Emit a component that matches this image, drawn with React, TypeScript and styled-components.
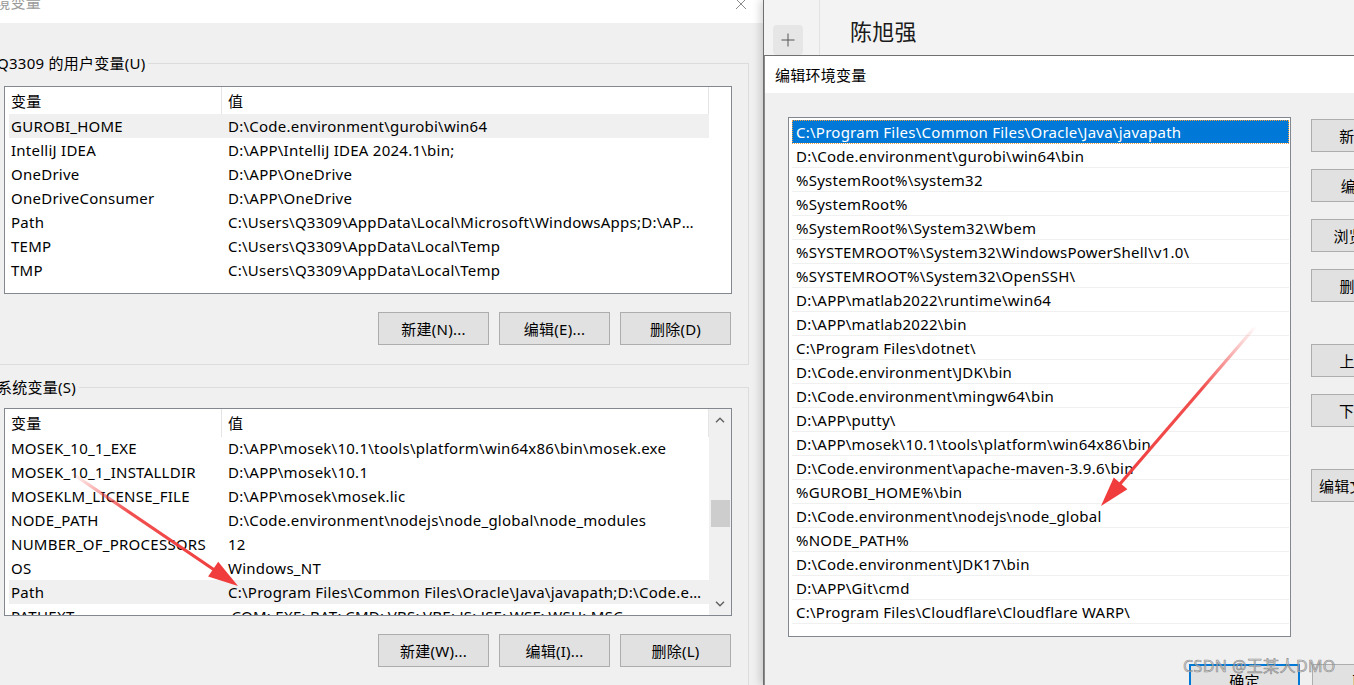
import React from "react";
import styled, { createGlobalStyle } from "styled-components";

const FONT = `"Noto Sans", "Noto Sans CJK SC", sans-serif`;

const GlobalStyle = createGlobalStyle`
  html, body { margin: 0; padding: 0; overflow: hidden; background: #f0f0f0; }
  * { box-sizing: border-box; }
`;

const Screen = styled.div`
  position: relative;
  width: 1354px;
  height: 685px;
  overflow: hidden;
  display: flex;
  font-family: ${FONT};
  font-size: 15px;
  letter-spacing: 0.25px;
  color: #000;
  background: #f0f0f0;
`;

/* ---------- left: 环境变量 window ---------- */
const EnvWindow = styled.div`
  width: 763px;
  flex: none;
  display: flex;
  flex-direction: column;
  background: #f0f0f0;
`;

const EnvTitleBar = styled.div`
  height: 23px;
  flex: none;
  background: #fff;
  display: flex;
  justify-content: space-between;
  align-items: flex-start;
  overflow: hidden;
`;

const EnvTitle = styled.span`
  margin: -9px 0 0 -20px;
  line-height: 22px;
  color: #9a9a9a;
  white-space: nowrap;
`;

const CloseGlyph = styled.svg`
  margin: -2px 16px 0 0;
  flex: none;
`;

const EnvBody = styled.div`
  flex: 1;
  padding: 29px 14px 0 0;
  display: flex;
  flex-direction: column;
`;

const GroupBox = styled.fieldset<{ $padTop: number; $mt: number }>`
  margin: ${(p) => p.$mt}px 0 0 0;
  padding: ${(p) => p.$padTop}px 16px 19px 4px;
  border: 1px solid #dcdcdc;
  border-left: none;
  min-width: 0;
`;

const GroupLegend = styled.legend`
  padding: 0 3px 0 0;
  margin-left: -7px;
  line-height: 22px;
  white-space: nowrap;
`;

const ListBox = styled.div`
  width: 728px;
  height: 208px;
  border: 1px solid #828790;
  background: #fff;
  display: flex;
  overflow: hidden;
`;

const ListContent = styled.div`
  width: 704px;
  flex: none;
  display: flex;
  flex-direction: column;
  overflow: hidden;
`;

const HeaderRow = styled.div`
  display: grid;
  grid-template-columns: 217px 487px;
  height: 27px;
  flex: none;
`;

const HeaderCell = styled.div`
  padding-left: 6px;
  line-height: 28px;
  border-right: 1px solid #e5e5e5;
`;

const VarRow = styled.div<{ $selected?: boolean }>`
  display: grid;
  grid-template-columns: 212px 1fr;
  height: 24px;
  flex: none;
  margin-left: 4px;
  align-items: center;
  background: ${(p) => (p.$selected ? "#f0f0f0" : "transparent")};
`;

const NameCell = styled.div`
  padding-left: 2px;
  white-space: nowrap;
  overflow: hidden;
`;

const ValueCell = styled.div`
  padding: 0 7px 0 7px;
  white-space: nowrap;
  overflow: hidden;
  text-overflow: ellipsis;
`;

const ScrollBar = styled.div`
  width: 22px;
  flex: none;
  background: #f0f0f0;
  display: flex;
  flex-direction: column;
`;

const ScrollArrow = styled.div`
  height: 22px;
  flex: none;
  display: flex;
  align-items: center;
  justify-content: center;
`;

const ScrollTrack = styled.div`
  flex: 1;
  display: flex;
  flex-direction: column;
  align-items: center;
`;

const ScrollThumb = styled.div<{ $offset: number }>`
  margin-top: ${(p) => p.$offset}px;
  width: 19px;
  height: 27px;
  background: #cdcdcd;
`;

const ButtonRow = styled.div`
  display: flex;
  justify-content: flex-end;
  gap: 10px;
  margin-top: 18px;
  padding-right: 1px;
`;

const WinButton = styled.button<{ $width?: number }>`
  width: ${(p) => p.$width ?? 111}px;
  height: 33px;
  flex: none;
  padding: 0;
  border: 1px solid #adadad;
  background: #e1e1e1;
  font-family: ${FONT};
  font-size: 15px;
  letter-spacing: 0.25px;
  color: #000;
  white-space: nowrap;
  overflow: hidden;
`;

/* ---------- right: settings window + 编辑环境变量 ---------- */
const SettingsWindow = styled.div`
  flex: 1;
  position: relative;
  display: flex;
  flex-direction: column;
  background: #f3f3f3;
  border-left: 1px solid #6e6e6e;
  box-shadow: -3px 0 8px rgba(0, 0, 0, 0.16);
  min-width: 0;
`;

const SettingsHeader = styled.div`
  height: 55px;
  flex: none;
  display: flex;
`;

const NavRail = styled.div`
  width: 56px;
  flex: none;
  border-right: 1px solid #e2e2e2;
  padding: 25px 0 0 9px;
`;

const AddButton = styled.div`
  width: 30px;
  height: 30px;
  border-radius: 4px;
  background: #e6e6e6;
  display: flex;
  align-items: center;
  justify-content: center;
`;

const ProfileName = styled.div`
  padding: 16px 0 0 30px;
  font-size: 22px;
  line-height: 30px;
  color: #1b1b1b;
`;

const EditDialog = styled.div`
  flex: 1;
  display: flex;
  flex-direction: column;
  background: #f0f0f0;
  border-top: 1px solid #707070;
  border-left: 1px solid #8a8a8a;
  min-width: 0;
`;

const DialogTitleBar = styled.div`
  height: 37px;
  flex: none;
  background: #fff;
  padding: 0 0 1px 10px;
  display: flex;
  align-items: center;
`;

const DialogBody = styled.div`
  display: flex;
  padding: 24px 0 0 23px;
`;

const PathList = styled.div`
  width: 503px;
  height: 520px;
  flex: none;
  border: 1px solid #828790;
  background: #fff;
  padding: 2px 1px 0 3px;
  overflow: hidden;
  display: flex;
  flex-direction: column;
`;

const PathItem = styled.div<{ $selected?: boolean }>`
  height: 24px;
  flex: none;
  padding-left: 4px;
  line-height: 24px;
  white-space: nowrap;
  border-bottom: 1px solid ${(p) => (p.$selected ? "#fff" : "#f0f0f0")};
  background: ${(p) => (p.$selected ? "#0078d7" : "transparent")};
  color: ${(p) => (p.$selected ? "#fff" : "#000")};
  outline: ${(p) => (p.$selected ? "1px dotted #f0a040" : "none")};
  outline-offset: -1px;
`;

const SideButtons = styled.div`
  margin-left: 20px;
  padding-top: 2px;
  display: flex;
  flex-direction: column;
`;

const SideButton = styled(WinButton)<{ $gap: number }>`
  margin-top: ${(p) => p.$gap}px;
`;

const DialogFooter = styled.div`
  display: flex;
  gap: 12px;
  margin-top: 27px;
  padding-left: 424px;
`;

const PrimaryButton = styled(WinButton)`
  border: 2px solid #0078d7;
`;

/* ---------- overlays ---------- */
const Watermark = styled.div`
  position: absolute;
  left: 1183px;
  top: 656px;
  font-size: 16px;
  line-height: 20px;
  letter-spacing: 0.4px;
  color: rgba(200, 200, 200, 0.7);
  -webkit-text-stroke: 0.6px rgba(110, 110, 110, 0.75);
  white-space: nowrap;
  pointer-events: none;
`;

const ArrowLayer = styled.svg`
  position: absolute;
  left: 0;
  top: 0;
  pointer-events: none;
`;

/* ---------- data ---------- */
const userVars: [string, string][] = [
  ["GUROBI_HOME", "D:\\Code.environment\\gurobi\\win64"],
  ["IntelliJ IDEA", "D:\\APP\\IntelliJ IDEA 2024.1\\bin;"],
  ["OneDrive", "D:\\APP\\OneDrive"],
  ["OneDriveConsumer", "D:\\APP\\OneDrive"],
  ["Path", "C:\\Users\\Q3309\\AppData\\Local\\Microsoft\\WindowsApps;D:\\APP\\Microsoft VS Code\\bin"],
  ["TEMP", "C:\\Users\\Q3309\\AppData\\Local\\Temp"],
  ["TMP", "C:\\Users\\Q3309\\AppData\\Local\\Temp"],
];

const sysVars: [string, string][] = [
  ["MOSEK_10_1_EXE", "D:\\APP\\mosek\\10.1\\tools\\platform\\win64x86\\bin\\mosek.exe"],
  ["MOSEK_10_1_INSTALLDIR", "D:\\APP\\mosek\\10.1"],
  ["MOSEKLM_LICENSE_FILE", "D:\\APP\\mosek\\mosek.lic"],
  ["NODE_PATH", "D:\\Code.environment\\nodejs\\node_global\\node_modules"],
  ["NUMBER_OF_PROCESSORS", "12"],
  ["OS", "Windows_NT"],
  ["Path", "C:\\Program Files\\Common Files\\Oracle\\Java\\javapath;D:\\Code.environment\\gurobi\\win64\\bin;"],
  ["PATHEXT", ".COM;.EXE;.BAT;.CMD;.VBS;.VBE;.JS;.JSE;.WSF;.WSH;.MSC"],
];

const paths = [
  "C:\\Program Files\\Common Files\\Oracle\\Java\\javapath",
  "D:\\Code.environment\\gurobi\\win64\\bin",
  "%SystemRoot%\\system32",
  "%SystemRoot%",
  "%SystemRoot%\\System32\\Wbem",
  "%SYSTEMROOT%\\System32\\WindowsPowerShell\\v1.0\\",
  "%SYSTEMROOT%\\System32\\OpenSSH\\",
  "D:\\APP\\matlab2022\\runtime\\win64",
  "D:\\APP\\matlab2022\\bin",
  "C:\\Program Files\\dotnet\\",
  "D:\\Code.environment\\JDK\\bin",
  "D:\\Code.environment\\mingw64\\bin",
  "D:\\APP\\putty\\",
  "D:\\APP\\mosek\\10.1\\tools\\platform\\win64x86\\bin",
  "D:\\Code.environment\\apache-maven-3.9.6\\bin",
  "%GUROBI_HOME%\\bin",
  "D:\\Code.environment\\nodejs\\node_global",
  "%NODE_PATH%",
  "D:\\Code.environment\\JDK17\\bin",
  "D:\\APP\\Git\\cmd",
  "C:\\Program Files\\Cloudflare\\Cloudflare WARP\\",
  "",
];

const sideButtons: [string, number][] = [
  ["新建(N)", 0],
  ["编辑(E)", 17],
  ["浏览(B)...", 17],
  ["删除(D)", 17],
  ["上移(U)", 42],
  ["下移(O)", 17],
  ["编辑文本(T)...", 42],
];

/* ---------- pieces ---------- */
function VarList({
  rows,
  selected,
  scroll,
}: {
  rows: [string, string][];
  selected: number;
  scroll?: boolean;
}) {
  return (
    <ListBox>
      <ListContent>
        <HeaderRow>
          <HeaderCell>变量</HeaderCell>
          <HeaderCell>值</HeaderCell>
        </HeaderRow>
        {rows.map(([n, v], i) => (
          <VarRow key={n + i} $selected={i === selected}>
            <NameCell>{n}</NameCell>
            <ValueCell>{v}</ValueCell>
          </VarRow>
        ))}
      </ListContent>
      {scroll && (
        <ScrollBar>
          <ScrollArrow>
            <svg width="10" height="6" viewBox="0 0 10 6">
              <path d="M1 5.2 L5 1.2 L9 5.2" fill="none" stroke="#606060" strokeWidth="1.4" />
            </svg>
          </ScrollArrow>
          <ScrollTrack>
            <ScrollThumb $offset={69} />
          </ScrollTrack>
          <ScrollArrow>
            <svg width="10" height="6" viewBox="0 0 10 6">
              <path d="M1 0.8 L5 4.8 L9 0.8" fill="none" stroke="#606060" strokeWidth="1.4" />
            </svg>
          </ScrollArrow>
        </ScrollBar>
      )}
    </ListBox>
  );
}

function Arrow({
  x1,
  y1,
  x2,
  y2,
  id,
  len = 30,
  half = 9,
}: {
  x1: number;
  y1: number;
  x2: number;
  y2: number;
  id: string;
  len?: number;
  half?: number;
}) {
  const dx = x1 - x2;
  const dy = y1 - y2;
  const d = Math.hypot(dx, dy);
  const ux = dx / d;
  const uy = dy / d;
  const bx = x2 + ux * len;
  const by = y2 + uy * len;
  const px = -uy;
  const py = ux;
  const head = `${x2},${y2} ${bx + px * half},${by + py * half} ${bx - px * half},${by - py * half}`;
  return (
    <g>
      <defs>
        <linearGradient id={id} gradientUnits="userSpaceOnUse" x1={x1} y1={y1} x2={x2} y2={y2}>
          <stop offset="0" stopColor="#f03c3c" stopOpacity="0" />
          <stop offset="0.35" stopColor="#f03c3c" stopOpacity="0.9" />
          <stop offset="1" stopColor="#f03c3c" stopOpacity="1" />
        </linearGradient>
      </defs>
      <line x1={x1} y1={y1} x2={bx - ux * 2} y2={by - uy * 2} stroke={`url(#${id})`} strokeWidth="3.2" />
      <polygon points={head} fill="#f03c3c" />
    </g>
  );
}

export default function App() {
  return (
    <>
      <GlobalStyle />
      <Screen>
        <EnvWindow>
          <EnvTitleBar>
            <EnvTitle>环境变量</EnvTitle>
            <CloseGlyph width="12" height="12" viewBox="0 0 12 12">
              <path d="M1 1 L11 11 M11 1 L1 11" stroke="#8a8a8a" strokeWidth="1" />
            </CloseGlyph>
          </EnvTitleBar>
          <EnvBody>
            <GroupBox $padTop={12} $mt={0}>
              <GroupLegend>Q3309 的用户变量(U)</GroupLegend>
              <VarList rows={userVars} selected={0} />
              <ButtonRow>
                <WinButton>新建(N)...</WinButton>
                <WinButton>编辑(E)...</WinButton>
                <WinButton>删除(D)</WinButton>
              </ButtonRow>
            </GroupBox>
            <GroupBox $padTop={10} $mt={11}>
              <GroupLegend>系统变量(S)</GroupLegend>
              <VarList rows={sysVars} selected={6} scroll />
              <ButtonRow>
                <WinButton>新建(W)...</WinButton>
                <WinButton>编辑(I)...</WinButton>
                <WinButton>删除(L)</WinButton>
              </ButtonRow>
            </GroupBox>
          </EnvBody>
        </EnvWindow>

        <SettingsWindow>
          <SettingsHeader>
            <NavRail>
              <AddButton>
                <svg width="14" height="14" viewBox="0 0 14 14">
                  <path d="M7 0.5 V13.5 M0.5 7 H13.5" stroke="#555" strokeWidth="1" />
                </svg>
              </AddButton>
            </NavRail>
            <ProfileName>陈旭强</ProfileName>
          </SettingsHeader>
          <EditDialog>
            <DialogTitleBar>编辑环境变量</DialogTitleBar>
            <DialogBody>
              <PathList>
                {paths.map((p, i) => (
                  <PathItem key={i} $selected={i === 0}>
                    {p}
                  </PathItem>
                ))}
              </PathList>
              <SideButtons>
                {sideButtons.map(([t, g]) => (
                  <SideButton key={t} $gap={g} $width={108}>
                    {t}
                  </SideButton>
                ))}
              </SideButtons>
            </DialogBody>
            <DialogFooter>
              <PrimaryButton>确定</PrimaryButton>
              <WinButton>取消</WinButton>
            </DialogFooter>
          </EditDialog>
        </SettingsWindow>

        <Watermark>CSDN @王某人DMO</Watermark>
        <ArrowLayer width="1354" height="685" viewBox="0 0 1354 685">
          <Arrow id="ga" x1={1256} y1={326} x2={1101} y2={506} />
          <Arrow id="gb" x1={70} y1={472} x2={238} y2={586} />
        </ArrowLayer>
      </Screen>
    </>
  );
}
